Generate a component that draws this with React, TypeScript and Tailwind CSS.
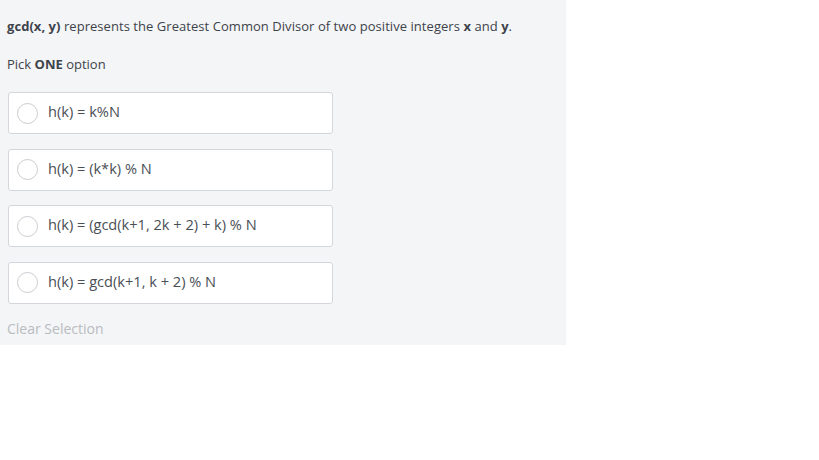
import React, { useState } from 'react';

const options = [
  'h(k) = k%N',
  'h(k) = (k*k) % N',
  'h(k) = (gcd(k+1, 2k + 2) + k) % N',
  'h(k) = gcd(k+1, k + 2) % N',
];

const App: React.FC = () => {
  const [selected, setSelected] = useState<number | null>(null);

  return (
    <div className="min-h-[460px] bg-white" style={{ fontFamily: '"Open Sans", sans-serif' }}>
      <div className="w-[566px] h-[345px] bg-[#f4f5f7] pl-[7px] pt-[17px]">
        <p className="text-[13px] leading-[18px] text-[#3d434b] tracking-[0.05px]">
          <b>gcd(x, y)</b> represents the Greatest Common Divisor of two positive integers <b>x</b> and <b>y</b>.
        </p>
        <p className="mt-[20px] text-[13px] leading-[18px] text-[#3d434b]">
          Pick <b>ONE</b> option
        </p>
        <div className="mt-[19px] ml-px flex flex-col gap-[14.6px]">
          {options.map((opt, i) => (
            <label
              key={i}
              onClick={() => setSelected(i)}
              className="w-[325px] h-[42px] flex items-center gap-[10px] bg-white border border-[#d3d6da] rounded-[3px] pl-[8px] cursor-pointer"
            >
              <span className="w-[21px] h-[21px] rounded-full border border-[#c9ccd0] bg-white flex items-center justify-center">
                {selected === i && <span className="w-[11px] h-[11px] rounded-full bg-[#39424e]" />}
              </span>
              <span className="text-[14.6px] text-[#4a4f55] mt-[-2px]">{opt}</span>
            </label>
          ))}
        </div>
        <button
          onClick={() => setSelected(null)}
          className="mt-[16px] text-[14px] leading-[18px] text-[#b9bcc0]"
        >
          Clear Selection
        </button>
      </div>
    </div>
  );
};

export default App;
